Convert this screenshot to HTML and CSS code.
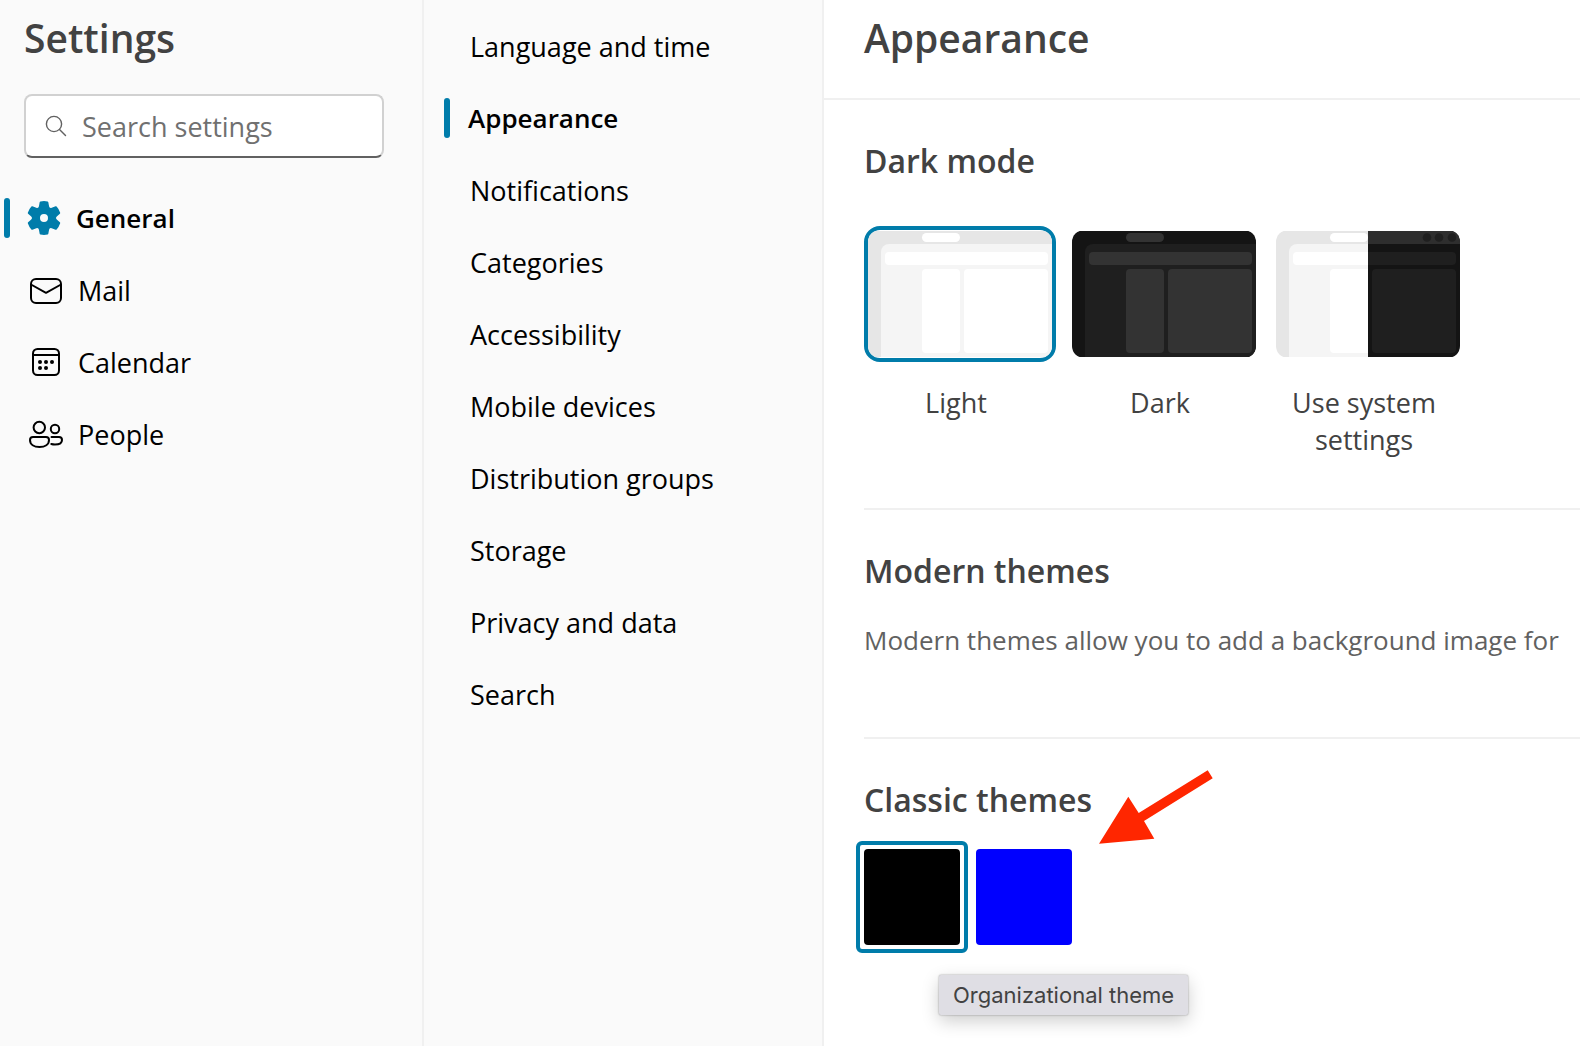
FILE: index.html
```html
<!DOCTYPE html>
<html lang="en">
<head>
  <meta charset="UTF-8">
  <meta name="viewport" content="width=device-width, initial-scale=1.0">
  <title>Settings - Appearance</title>
  <link rel="stylesheet" href="styles.css">
</head>
<body>
  <div class="settings">
    <!-- Main categories -->
    <aside class="sidebar">
      <h1>Settings</h1>
      <div class="search-box">
        <svg class="search-icon" width="24" height="24" viewBox="0 0 24 24" fill="none" stroke="#616161" stroke-width="1.4" stroke-linecap="round">
          <circle cx="10" cy="10" r="7.6" />
          <path d="M15.5 15.5L21.5 21.5" />
        </svg>
        <input type="text" placeholder="Search settings" aria-label="Search settings">
      </div>
      <nav class="nav">
        <a href="#general" class="nav-item active">
          <svg class="icon" viewBox="1 0 20 20" fill="#007caa">
            <path fill-rule="evenodd" d="M1.91 7.38A8.5 8.5 0 0 1 3.69 4.3a.5.5 0 0 1 .54-.13l1.92.68a1 1 0 0 0 1.32-.76l.36-2a.5.5 0 0 1 .4-.4 8.53 8.53 0 0 1 3.55 0c.2.04.35.2.38.4l.37 2a1 1 0 0 0 1.32.76l1.92-.68a.5.5 0 0 1 .54.13 8.5 8.5 0 0 1 1.78 3.08c.06.2 0 .4-.15.54l-1.56 1.32a1 1 0 0 0 0 1.52l1.56 1.32a.5.5 0 0 1 .15.54 8.5 8.5 0 0 1-1.78 3.08.5.5 0 0 1-.54.13l-1.92-.68a1 1 0 0 0-1.32.76l-.37 2a.5.5 0 0 1-.38.4 8.53 8.53 0 0 1-3.56 0 .5.5 0 0 1-.39-.4l-.36-2a1 1 0 0 0-1.32-.76l-1.92.68a.5.5 0 0 1-.54-.13 8.5 8.5 0 0 1-1.78-3.08.5.5 0 0 1 .15-.54l1.56-1.32a1 1 0 0 0 0-1.52L2.06 7.92a.5.5 0 0 1-.15-.54ZM8 10a2 2 0 1 0 4 0 2 2 0 0 0-4 0Z" />
          </svg>
          General
        </a>
        <a href="#mail" class="nav-item">
          <svg class="icon" viewBox="0 0 40 40" fill="none" stroke="#000" stroke-width="2" stroke-linejoin="round">
            <rect x="5" y="9" width="30" height="24" rx="5" />
            <path d="M5 14.5L20 22.8L35 14.5" />
          </svg>
          Mail
        </a>
        <a href="#calendar" class="nav-item">
          <svg class="icon" viewBox="0 0 40 40" fill="none" stroke="#000" stroke-width="2">
            <rect x="7" y="7" width="26" height="26" rx="4.5" />
            <path d="M7 13H33" />
            <g fill="#000" stroke="none">
              <circle cx="14" cy="20" r="2" />
              <circle cx="20" cy="20" r="2" />
              <circle cx="26" cy="20" r="2" />
              <circle cx="14" cy="26" r="2" />
              <circle cx="20" cy="26" r="2" />
            </g>
          </svg>
          Calendar
        </a>
        <a href="#people" class="nav-item">
          <svg class="icon" viewBox="0 0 40 40" fill="none" stroke="#000" stroke-width="2" stroke-linecap="round" stroke-linejoin="round">
            <circle cx="13.3" cy="13.5" r="5.7" />
            <circle cx="29" cy="15" r="4.2" />
            <path d="M7 23H20A3 3 0 0 1 23 26C23 30.5 19 33 13.5 33S4 30.5 4 26A3 3 0 0 1 7 23Z" />
            <path d="M25.5 23H33A3 3 0 0 1 36 26C36 29 33 30.5 29 30.5Q27 30.5 25.3 30" />
          </svg>
          People
        </a>
      </nav>
    </aside>

    <!-- Pages of the General category -->
    <nav class="subnav">
      <a href="#language" class="nav-item">Language and time</a>
      <a href="#appearance" class="nav-item active">Appearance</a>
      <a href="#notifications" class="nav-item">Notifications</a>
      <a href="#categories" class="nav-item">Categories</a>
      <a href="#accessibility" class="nav-item">Accessibility</a>
      <a href="#mobile" class="nav-item">Mobile devices</a>
      <a href="#groups" class="nav-item">Distribution groups</a>
      <a href="#storage" class="nav-item">Storage</a>
      <a href="#privacy" class="nav-item">Privacy and data</a>
      <a href="#search" class="nav-item">Search</a>
    </nav>

    <main class="content">
      <header class="content-header">
        <h2>Appearance</h2>
      </header>

      <section>
        <h3>Dark mode</h3>
        <div class="modes">
          <label class="mode">
            <input type="radio" name="mode" checked>
            <span class="preview">
              <svg width="184" height="126" viewBox="0 0 184 126">
                <rect width="184" height="126" fill="#e6e6e6" />
                <path d="M13 126V21A8 8 0 0 1 21 13H184V126Z" fill="#f5f5f5" />
                <g fill="#fff">
                  <rect x="54" y="2" width="38" height="9" rx="4.5" />
                  <rect x="17" y="21" width="163" height="13" rx="4" />
                  <rect x="54" y="38" width="38" height="84" rx="4" />
                  <rect x="96" y="38" width="84" height="84" rx="4" />
                </g>
              </svg>
            </span>
            <span class="mode-name">Light</span>
          </label>
          <label class="mode">
            <input type="radio" name="mode">
            <span class="preview">
              <svg width="184" height="126" viewBox="0 0 184 126">
                <rect width="184" height="126" fill="#141414" />
                <path d="M13 126V21A8 8 0 0 1 21 13H184V126Z" fill="#1f1f1f" />
                <g fill="#333">
                  <rect x="54" y="2" width="38" height="9" rx="4.5" />
                  <rect x="17" y="21" width="163" height="13" rx="4" />
                  <rect x="54" y="38" width="38" height="84" rx="4" />
                  <rect x="96" y="38" width="84" height="84" rx="4" />
                </g>
              </svg>
            </span>
            <span class="mode-name">Dark</span>
          </label>
          <label class="mode">
            <input type="radio" name="mode">
            <span class="preview">
              <svg width="184" height="126" viewBox="0 0 184 126">
                <rect width="92" height="126" fill="#e6e6e6" />
                <path d="M13 126V21A8 8 0 0 1 21 13H92V126Z" fill="#f5f5f5" />
                <g fill="#fff">
                  <rect x="54" y="2" width="38" height="9" rx="4.5" />
                  <rect x="17" y="21" width="163" height="13" rx="4" />
                  <rect x="54" y="38" width="42" height="84" rx="4" />
                </g>
                <rect x="92" width="92" height="126" fill="#141414" />
                <rect x="92" width="92" height="13" fill="#2e2e2e" />
                <g fill="#1f1f1f">
                  <circle cx="151" cy="6.5" r="4.3" />
                  <circle cx="163" cy="6.5" r="4.3" />
                  <circle cx="176" cy="6.5" r="4.3" />
                  <path d="M92 21H176A4 4 0 0 1 180 25V30A4 4 0 0 1 176 34H92Z" />
                  <rect x="96" y="38" width="84" height="84" rx="4" />
                </g>
              </svg>
            </span>
            <span class="mode-name">Use system settings</span>
          </label>
        </div>
      </section>

      <section>
        <h3>Modern themes</h3>
        <p>Modern themes allow you to add a background image for</p>
      </section>

      <section>
        <h3>Classic themes</h3>
        <div class="swatches">
          <input type="radio" name="theme" class="swatch black" aria-label="Black" checked>
          <input type="radio" name="theme" class="swatch blue" aria-label="Blue" aria-describedby="theme-tip">
          <div class="tooltip" id="theme-tip" role="tooltip">Organizational theme</div>
          <svg class="arrow" width="116" height="76" viewBox="0 0 116 76" fill="#ff2600">
            <path d="M1 74.7L30.3 27.7L40.7 44L109.7 1.3L114.7 9.3L46 52L56.3 69.7Z" />
          </svg>
        </div>
      </section>
    </main>
  </div>
</body>
</html>
```

FILE: styles.css
```css
* {
  box-sizing: border-box;
}

body {
  margin: 0;
  font-family: 'Segoe UI', 'Open Sans', sans-serif;
  font-size: 27px;
  line-height: 37px;
  color: #424242;
  background-color: #fff;
}

h1, h2, h3, p {
  margin: 0;
}

h1, h2 {
  font-size: 39px;
  line-height: 56px;
  font-weight: 600;
}

h3 {
  font-size: 32px;
  line-height: 42px;
  font-weight: 600;
}

.settings {
  display: grid;
  grid-template-columns: 424px 400px minmax(0, 1fr);
  min-height: 100vh;
}

.sidebar,
.subnav {
  background-color: #fafafa;
  border-right: 2px solid #f0f0f0;
}

.sidebar h1 {
  padding: 10px 24px 0;
}

.search-box {
  display: flex;
  align-items: center;
  gap: 14px;
  height: 64px;
  margin: 28px 38px 24px 24px;
  padding: 0 18px;
  background-color: #fff;
  border: 2px solid #d1d1d1;
  border-bottom-color: #616161;
  border-radius: 8px;
}

.search-icon {
  flex: none;
}

.search-box input {
  flex: 1;
  min-width: 0;
  padding: 0;
  border: none;
  outline: none;
  background: none;
  font: inherit;
}

.search-box input::placeholder {
  color: #707070;
}

.nav-item {
  display: flex;
  align-items: center;
  height: 72px;
  color: #000;
  text-decoration: none;
}

/* Selection bar */
.nav-item::before {
  content: '';
  width: 6px;
  height: 40px;
  margin-right: 16px;
  border-radius: 3px;
}

.nav-item.active {
  font-size: 26px;
  font-weight: 600;
}

.nav-item.active::before {
  background-color: #007caa;
}

.nav {
  padding-left: 4px;
}

.icon {
  width: 40px;
  height: 40px;
  margin-right: 12px;
}

.active .icon {
  margin-right: 10px;
}

.subnav {
  padding: 10px 0 0 20px;
}

.subnav .nav-item::before {
  margin-right: 20px;
}

.subnav .active::before {
  margin-right: 18px;
}

.content-header {
  height: 100px;
  padding: 10px 40px 0;
  border-bottom: 2px solid #f0f0f0;
}

section {
  margin-left: 40px;
  padding: 40px 0 50px;
}

section + section {
  border-top: 2px solid #f0f0f0;
}

section p {
  margin: 30px 0 28px;
  font-size: 26px;
  color: #616161;
  white-space: nowrap;
}

.modes {
  display: flex;
  gap: 12px;
  margin-top: 44px;
}

.mode {
  width: 192px;
  cursor: pointer;
}

.mode input {
  position: absolute;
  opacity: 0;
}

.preview {
  display: block;
  height: 136px;
  padding: 1px 0;
  border: 4px solid transparent;
  border-radius: 16px;
  overflow: hidden;
}

.preview svg {
  display: block;
  border-radius: 8px;
}

.mode input:checked + .preview {
  border-color: #007caa;
}

.mode-name {
  display: block;
  width: 184px;
  margin-top: 22px;
  padding: 0 12px;
  text-align: center;
}

.swatches {
  position: relative;
  display: flex;
  gap: 16px;
  margin-top: 28px;
}

.swatch {
  position: relative;
  appearance: none;
  width: 96px;
  height: 96px;
  margin: 0;
  border-radius: 4px;
  cursor: pointer;
}

/* Ring around the chosen theme */
.swatch:checked::before {
  content: '';
  position: absolute;
  inset: -8px;
  border: 4px solid #007caa;
  border-radius: 6px;
}

.black {
  background-color: #000;
}

.blue {
  background-color: #00f;
}

.tooltip {
  position: absolute;
  top: 126px;
  left: 75px;
  padding: 0 14px;
  font-family: Inter, sans-serif;
  font-size: 22px;
  line-height: 40px;
  white-space: nowrap;
  background-color: #dfdee4;
  border-radius: 2px;
  box-shadow: 0 0 2px rgba(0, 0, 0, 0.4), 0 6px 18px rgba(0, 0, 0, 0.2);
}

.arrow {
  position: absolute;
  top: -80px;
  left: 234px;
}
```
